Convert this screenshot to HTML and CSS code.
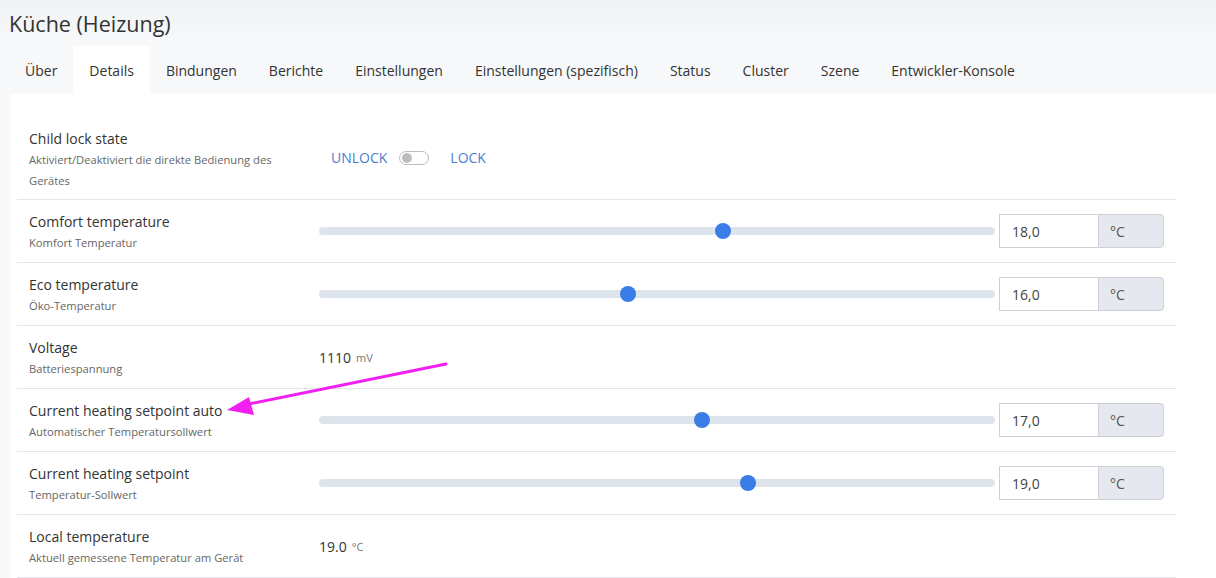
FILE: index.html
```html
<!DOCTYPE html>
<html lang="de">
<head>
<meta charset="utf-8">
<title>Küche (Heizung)</title>
<link rel="stylesheet" href="styles.css">
</head>
<body>
<div class="page">
  <h1 class="title">Küche (Heizung)</h1>
  <nav class="tabs">
    <a class="tab">Über</a>
    <a class="tab active">Details</a>
    <a class="tab">Bindungen</a>
    <a class="tab">Berichte</a>
    <a class="tab">Einstellungen</a>
    <a class="tab">Einstellungen (spezifisch)</a>
    <a class="tab">Status</a>
    <a class="tab">Cluster</a>
    <a class="tab">Szene</a>
    <a class="tab">Entwickler-Konsole</a>
  </nav>
  <div class="card">
    <div class="row first">
      <div class="label">
        <div class="name">Child lock state</div>
        <div class="desc">Aktiviert/Deaktiviert die direkte Bedienung des Gerätes</div>
      </div>
      <div class="value">
        <div class="lock">
          <span class="lock-text">UNLOCK</span>
          <span class="switch"><span class="knob"></span></span>
          <span class="lock-text lock-on">LOCK</span>
        </div>
      </div>
    </div>
    <div class="row">
      <div class="label">
        <div class="name">Comfort temperature</div>
        <div class="desc">Komfort Temperatur</div>
      </div>
      <div class="value">
        <div class="slider"><div class="track"></div><div class="thumb" style="left:59.8%"></div></div>
        <div class="group"><div class="input">18,0</div><div class="addon">°C</div></div>
      </div>
    </div>
    <div class="row">
      <div class="label">
        <div class="name">Eco temperature</div>
        <div class="desc">Öko-Temperatur</div>
      </div>
      <div class="value">
        <div class="slider"><div class="track"></div><div class="thumb" style="left:45.7%"></div></div>
        <div class="group"><div class="input">16,0</div><div class="addon">°C</div></div>
      </div>
    </div>
    <div class="row">
      <div class="label">
        <div class="name">Voltage</div>
        <div class="desc">Batteriespannung</div>
      </div>
      <div class="value">
        <span class="reading">1110</span><span class="unit">mV</span>
      </div>
    </div>
    <div class="row">
      <div class="label">
        <div class="name">Current heating setpoint auto</div>
        <div class="desc">Automatischer Temperatursollwert</div>
      </div>
      <div class="value">
        <div class="slider"><div class="track"></div><div class="thumb" style="left:56.7%"></div></div>
        <div class="group"><div class="input">17,0</div><div class="addon">°C</div></div>
      </div>
    </div>
    <div class="row">
      <div class="label">
        <div class="name">Current heating setpoint</div>
        <div class="desc">Temperatur-Sollwert</div>
      </div>
      <div class="value">
        <div class="slider"><div class="track"></div><div class="thumb" style="left:63.5%"></div></div>
        <div class="group"><div class="input">19,0</div><div class="addon">°C</div></div>
      </div>
    </div>
    <div class="row">
      <div class="label">
        <div class="name">Local temperature</div>
        <div class="desc">Aktuell gemessene Temperatur am Gerät</div>
      </div>
      <div class="value">
        <span class="reading">19.0</span><span class="unit">°C</span>
      </div>
    </div>
  </div>
  <svg class="annotation" width="1216" height="578" viewBox="0 0 1216 578">
    <line x1="446" y1="364" x2="244" y2="405" stroke="#f020f0" stroke-width="3" stroke-linecap="round"/>
    <polygon points="227,410 249,397 254,415" fill="#f020f0"/>
  </svg>
</div>
</body>
</html>
```
FILE: styles.css
```css
* { box-sizing: border-box; }
html, body { margin: 0; padding: 0; }
body {
  font-family: "Open Sans", "Noto Sans", sans-serif;
  color: #333;
  background: #f7f8fa;
  width: 1216px;
  height: 578px;
  overflow: hidden;
}
.page {
  position: relative;
  min-height: 578px;
  padding-left: 9px;
  background: linear-gradient(#f1f2f4 0px, #f7f8fa 40px, #f7f8fa 100%);
}
.title {
  margin: 0;
  padding-top: 10px;
  height: 46px;
  font-size: 21.5px;
  font-weight: 400;
  line-height: 28px;
  color: #333;
}
.tabs {
  display: flex;
  height: 48px;
}
.tab {
  display: flex;
  align-items: center;
  padding: 0 16px;
  font-size: 14px;
  color: #333;
}
.tab.active { background: #fff; }
.card {
  background: #fff;
  margin-left: 1px;
  padding: 22px 0 0 7px;
  min-height: 500px;
}
.row {
  display: flex;
  width: 1159px;
  padding: 11px 12px 9px 12px;
  border-bottom: 1px solid #e4e6e9;
}
.row.first {
  padding-top: 12px;
  padding-bottom: 8px;
}
.label {
  width: 290px;
  flex: none;
  padding-right: 20px;
}
.name {
  font-size: 14px;
  line-height: 21px;
  color: #333;
}
.desc {
  font-size: 11.2px;
  line-height: 21px;
  color: #666;
}
.value {
  flex: 1;
  display: flex;
  align-items: center;
  gap: 4px;
  padding-bottom: 2px;
}
.lock {
  display: flex;
  align-items: center;
  padding-left: 12px;
  margin-top: -2px;
}
.lock-text {
  font-size: 14px;
  color: #4a7fcf;
}
.switch {
  display: flex;
  align-items: center;
  width: 30px;
  height: 14px;
  margin: 0 21px 0 12px;
  border: 1px solid #bdbdbd;
  border-radius: 7px;
  padding-left: 2px;
}
.knob {
  width: 10px;
  height: 10px;
  border-radius: 50%;
  background: #bdbdbd;
}
.slider {
  position: relative;
  flex: 1;
  height: 16px;
}
.track {
  position: absolute;
  left: 0; right: 0;
  top: 4px;
  height: 8px;
  border-radius: 4px;
  background: #dee4eb;
}
.thumb {
  position: absolute;
  top: 0;
  width: 16px;
  height: 16px;
  margin-left: -8px;
  border-radius: 50%;
  background: #3b7de6;
}
.group {
  display: flex;
  width: 165px;
  height: 34px;
  flex: none;
}
.input {
  width: 99px;
  border: 1px solid #cdd0d4;
  border-right: none;
  padding-left: 12px;
  display: flex;
  align-items: center;
  font-size: 14px;
  color: #444;
}
.addon {
  flex: 1;
  background: #e5e8ee;
  border: 1px solid #cdd0d4;
  border-radius: 0 4px 4px 0;
  padding-left: 11px;
  display: flex;
  align-items: center;
  font-size: 14px;
  color: #555;
}
.reading {
  font-size: 14px;
  color: #333;
}
.unit {
  font-size: 11px;
  color: #777;
  margin-left: 1px;
}
.annotation {
  position: absolute;
  left: 0;
  top: 0;
  pointer-events: none;
}
```
